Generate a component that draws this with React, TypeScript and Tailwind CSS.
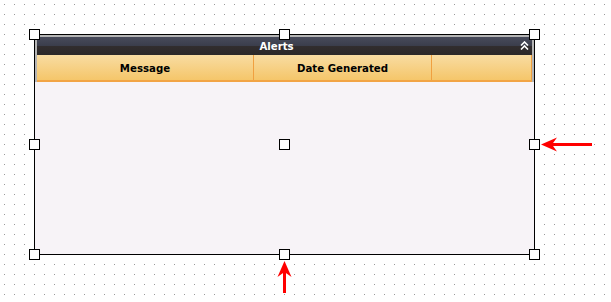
const handles = [
  'left-[29px] top-[29px]',
  'left-[279px] top-[29px]',
  'left-[529px] top-[29px]',
  'left-[29px] top-[139px]',
  'left-[279px] top-[139px]',
  'left-[529px] top-[139px]',
  'left-[29px] top-[249px]',
  'left-[279px] top-[249px]',
  'left-[529px] top-[249px]',
];

const columns = [
  { label: 'Message', w: 'w-[217px]' },
  { label: 'Date Generated', w: 'w-[178px]' },
  { label: '', w: 'w-[100px]' },
];

function CollapseIcon() {
  return (
    <svg width="9" height="9" viewBox="0 0 9 9" fill="none" stroke="white" strokeWidth="1.6">
      <path d="M1 4.5 L4.5 1 L8 4.5" />
      <path d="M1 8.5 L4.5 5 L8 8.5" />
    </svg>
  );
}

export default function App() {
  return (
    <div className="relative w-[611px] h-[302px] overflow-hidden bg-white font-['DejaVu_Sans',sans-serif]">
      {/* dotted designer canvas */}
      <svg className="absolute inset-0" width="611" height="302">
        <defs>
          <pattern id="dots" width="10" height="10" patternUnits="userSpaceOnUse">
            <rect x="4" y="4" width="1" height="1" fill="#9a9a9a" />
          </pattern>
        </defs>
        <rect width="611" height="302" fill="url(#dots)" />
      </svg>

      <div className="relative pl-[34px] pt-[34px]">
        <div className="w-[501px] h-[221px] border border-black flex flex-col bg-[#f7f3f7]">
          <div className="bg-[#b5b5b5] px-[2px] pt-[2px]">
            <div className="h-[18px] flex items-center text-white bg-[linear-gradient(to_bottom,#484b5b_0%,#3b3e4c_48%,#312d2e_52%,#2b2828_100%)]">
              <div className="flex-1 text-center text-[10.2px] font-bold leading-none pt-[2px]">Alerts</div>
              <div className="w-[16px] flex justify-center pb-[1px]">
                <CollapseIcon />
              </div>
            </div>
            <div className="h-[27px] flex border-b-2 border-[#f2a445] bg-[linear-gradient(to_bottom,#f8dca2,#f5c66a)]">
              {columns.map((c, i) => (
                <div
                  key={i}
                  className={`${c.w} flex items-center justify-center border-r border-[#f0a040] text-[10.2px] font-bold text-black leading-none pt-[3px]`}
                >
                  {c.label}
                </div>
              ))}
            </div>
          </div>
          <div className="flex-1" />
        </div>
      </div>

      {handles.map((h) => (
        <div key={h} className={`absolute ${h} w-[11px] h-[11px] bg-white border border-black`} />
      ))}

      <svg className="absolute inset-0 pointer-events-none" width="611" height="302">
        <rect x="552" y="143" width="40" height="3" fill="#ff0000" />
        <polygon points="541,144.5 557,137.5 552,144.5 557,151.5" fill="#ff0000" />
        <rect x="283" y="272" width="3" height="21" fill="#ff0000" />
        <polygon points="284.5,261 277.5,277 284.5,272 291.5,277" fill="#ff0000" />
      </svg>
    </div>
  );
}
